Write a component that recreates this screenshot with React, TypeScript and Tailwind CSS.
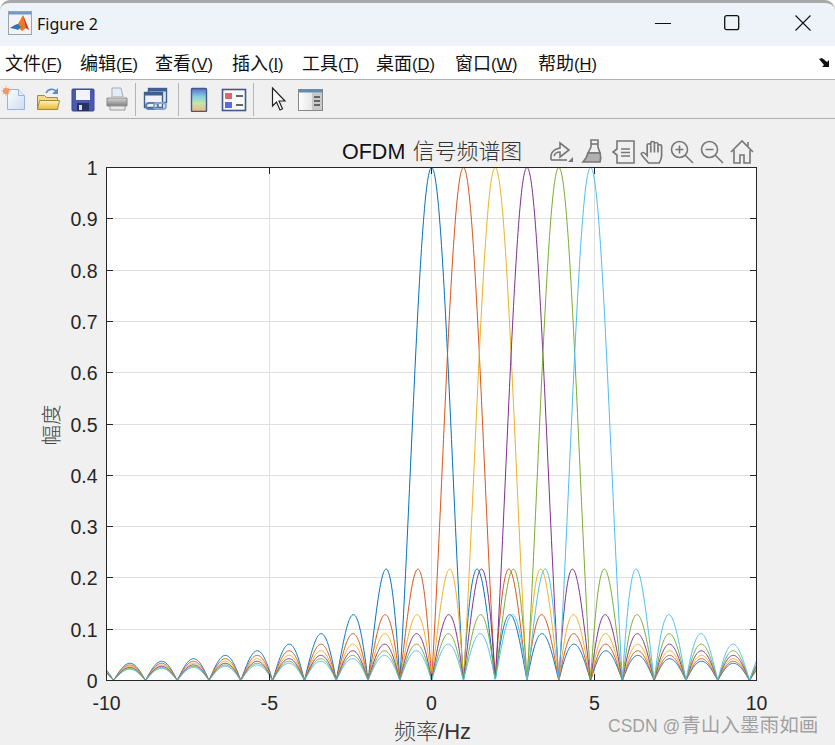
import React from "react";

const X0 = 431.6;
const STEP = 31.8;
const COLORS = ["#0072BD", "#D95319", "#EDB120", "#7E2F8E", "#77AC30", "#4DBEEE"];
const AX_L = 106.5;
const AX_R = 756.5;
const AX_T = 167.5;
const AX_B = 680.5;
const sans = '"Liberation Sans", "Noto Sans CJK SC", sans-serif';
const cjk = '"Noto Sans CJK SC", sans-serif';

function curve(k: number) {
  const c = X0 + k * STEP;
  let d = "";
  for (let x = AX_L; x <= AX_R; x += 0.5) {
    const u = (x - c) / STEP;
    const s = Math.abs(u) < 1e-6 ? 1 : Math.abs(Math.sin(Math.PI * u) / (Math.PI * u));
    d += `${d ? "L" : "M"}${x.toFixed(1)} ${(AX_B - s * (AX_B - AX_T)).toFixed(2)}`;
  }
  return d;
}

const MENU: [string, string, string][] = [
  ["文件", "F", "w-[75px]"],
  ["编辑", "E", "w-[75px]"],
  ["查看", "V", "w-[77px]"],
  ["插入", "I", "w-[70px]"],
  ["工具", "T", "w-[74px]"],
  ["桌面", "D", "w-[79px]"],
  ["窗口", "W", "w-[83px]"],
  ["帮助", "H", "w-[80px]"],
];

function MatlabIcon() {
  return (
    <svg width="24" height="24" viewBox="0 0 24 24" className="shrink-0">
      <rect x="0.5" y="0.5" width="23" height="23" fill="#f3f3f3" stroke="#9aa3ad" />
      <rect x="1" y="1" width="22" height="2.5" fill="#6f9cc8" />
      <path d="M2 17l5-3 3-1 5-9 6 15-3-2-4 3-3-3-3-1z" fill="#e8792b" />
      <path d="M2 17l5-3 3-1 3 3-3 3-3-1z" fill="#2f78b8" />
      <path d="M15 4l6 15-3-2z" fill="#c9391c" />
    </svg>
  );
}

function Sep({ cls }: { cls: string }) {
  return <div className={`w-px h-[33px] bg-[#b4b4b4] shrink-0 ${cls}`} />;
}

function Tool({ cls, children }: { cls: string; children: React.ReactNode }) {
  return (
    <svg width="26" height="26" viewBox="0 0 26 26" className={`shrink-0 ${cls}`}>
      {children}
    </svg>
  );
}

function Toolbar() {
  return (
    <div className="h-[39px] bg-[#f0f0f0] border-b border-[#b0b0b0] flex items-center shrink-0">
      <svg width="0" height="0" className="absolute">
        <defs>
          <linearGradient id="doc" x1="0" y1="0" x2="1" y2="1">
            <stop offset="0" stopColor="#ffffff" />
            <stop offset="1" stopColor="#c9dcf3" />
          </linearGradient>
          <linearGradient id="fold" x1="0" y1="0" x2="0" y2="1">
            <stop offset="0" stopColor="#fff3b0" />
            <stop offset="1" stopColor="#e9b93f" />
          </linearGradient>
          <linearGradient id="cbar" x1="0" y1="0" x2="0" y2="1">
            <stop offset="0" stopColor="#5a6fd0" />
            <stop offset="0.35" stopColor="#86cfe0" />
            <stop offset="0.65" stopColor="#c7e6a8" />
            <stop offset="1" stopColor="#f3b07e" />
          </linearGradient>
          <linearGradient id="prn" x1="0" y1="0" x2="0" y2="1">
            <stop offset="0" stopColor="#d8d8d8" />
            <stop offset="1" stopColor="#7d7d7d" />
          </linearGradient>
          <linearGradient id="pan" x1="0" y1="0" x2="1" y2="0">
            <stop offset="0" stopColor="#ffffff" />
            <stop offset="1" stopColor="#d4d4d4" />
          </linearGradient>
        </defs>
      </svg>
      <Tool cls="ml-[1px]">
        <path d="M6.5 3.5h11l6 6v14h-17z" fill="url(#doc)" stroke="#9db2d4" />
        <path d="M17.5 3.5v6h6" fill="#e4eefa" stroke="#9db2d4" />
        <circle cx="5" cy="5" r="3" fill="#ef8a56" />
        <path d="M5 0v10M0 5h10M1.5 1.5l7 7M8.5 1.5l-7 7" stroke="#f4a070" strokeWidth="0.8" />
      </Tool>
      <Tool cls="ml-[8px]">
        <path d="M2.5 9.5h7l2 2h11v12h-20z" fill="#f3d98a" stroke="#a8893f" />
        <path d="M2.5 23.5l2-9h20l-2 9z" fill="url(#fold)" stroke="#a8893f" />
        <path d="M11 7c2-4 7-5 10-2" fill="none" stroke="#5c8fc0" strokeWidth="1.6" />
        <path d="M23 2v6h-6z" fill="#5c8fc0" />
      </Tool>
      <Tool cls="ml-[9px]">
        <rect x="2" y="3" width="22" height="22" rx="1" fill="#4a5ab0" stroke="#3a4790" />
        <rect x="6" y="4" width="14" height="10" fill="#f2f4fa" />
        <rect x="7" y="17" width="12" height="8" fill="#2a3360" />
        <rect x="9" y="19" width="3" height="5" fill="#d8dcec" />
      </Tool>
      <Tool cls="ml-[8px]">
        <path d="M8 2h9l2 9H8z" fill="#e6ecf3" stroke="#a4acb6" />
        <path d="M3 12h20v8H3z" fill="url(#prn)" stroke="#888" />
        <path d="M5 12l3-2h11l3 2z" fill="#c4c4c4" />
        <path d="M6 20h15v4H6z" fill="#e8e8e8" stroke="#999" />
      </Tool>
      <Sep cls="ml-[5px]" />
      <Tool cls="ml-[7px]">
        <rect x="5.5" y="2.5" width="18" height="14" fill="#dfe8f4" stroke="#3f5f92" strokeWidth="1.4" />
        <rect x="5.5" y="2.5" width="18" height="3" fill="#3f5f92" />
        <rect x="1.5" y="6.5" width="18" height="15" fill="#eef3fa" stroke="#3f5f92" strokeWidth="1.4" />
        <rect x="1.5" y="6.5" width="18" height="3" fill="#3f5f92" />
        <rect x="3" y="17" width="12" height="6" rx="3" fill="none" stroke="#5d7fae" strokeWidth="2" />
        <rect x="11" y="17" width="12" height="6" rx="3" fill="none" stroke="#8aa4c8" strokeWidth="2" />
      </Tool>
      <Sep cls="ml-[9px]" />
      <Tool cls="ml-[7px]">
        <rect x="5.5" y="2.5" width="15" height="23" rx="1" fill="url(#cbar)" stroke="#3f5a8a" strokeWidth="1.4" />
      </Tool>
      <Tool cls="ml-[9px]">
        <rect x="1.5" y="3.5" width="23" height="21" fill="#fafbfd" stroke="#3f5a8a" strokeWidth="1.6" />
        <rect x="4" y="7" width="7" height="6" fill="#e4646c" />
        <rect x="4" y="16" width="7" height="6" fill="#5f68dc" />
        <path d="M15 10h7M15 19h7" stroke="#333" strokeWidth="1.4" />
      </Tool>
      <Sep cls="ml-[6px]" />
      <Tool cls="ml-[11px]">
        <path d="M7.5 2v18l4-4 3.500 8 2.500-1.200-3.500-7.800h6z" fill="#fff" stroke="#222" strokeWidth="1.200" />
      </Tool>
      <Tool cls="ml-[7px]">
        <rect x="0.5" y="3.5" width="24" height="21" fill="url(#pan)" stroke="#888" />
        <rect x="0.5" y="3.5" width="24" height="3" fill="#5f8db0" />
        <rect x="14" y="7" width="10" height="17" fill="#c8c8c8" />
        <path d="M16 11h6M16 15h6M16 19h6" stroke="#444" strokeWidth="1.400" />
      </Tool>
    </div>
  );
}

function AxesIcons() {
  return (
    <g fill="none" stroke="#777" strokeWidth="1.600">
      <g transform="translate(549 139)">
        <path d="M2 21v-5c1-4 4-6 9-7V4l9 7-9 7v-5c-3 0-5 1-6 4" />
        <path d="M2 21h16" />
        <path d="M19 23l5-5v5z" fill="#777" stroke="none" />
      </g>
      <g transform="translate(581 139)">
        <path d="M10 1h7v7l2 6H7l3-6z" />
        <path d="M10 5h7" />
        <path d="M7 14c-1 4-3 7-5 9h17c1-3 1-6 0-9z" fill="#b0b0b0" />
      </g>
      <g transform="translate(611 139)">
        <path d="M6 2h17v22H6v-8l-4-3 4-3z" />
        <path d="M10 10h9M10 13.500h9M10 17h9" />
      </g>
      <g transform="translate(640 139) scale(1.200 1.040)">
        <path d="M7 23c-2-3-6-7-6-9 1-2 3-1 5 2V6c0-2 3-2 3 0V4c0-2 3-2 3 0v1c0-2 3-2 3 0v2c0-2 3-2 3 0v9c0 3-1 5-2 7z" strokeWidth="1.400" />
        <path d="M9 6v7M12 5v8M15 7v6" strokeWidth="1.400" />
      </g>
      <g transform="translate(670 139)">
        <circle cx="9.500" cy="10.500" r="8" />
        <path d="M15 16l8 8M5.500 10.500h8M9.500 6.500v8" />
      </g>
      <g transform="translate(700 139)">
        <circle cx="9.500" cy="10.500" r="8" />
        <path d="M15 16l8 8M5.500 10.500h8" />
      </g>
      <g transform="translate(730 139)">
        <path d="M1 13L12 2l11 11M4 11v13h6v-8h4v8h6V11" />
        <path d="M18 3v4" />
      </g>
    </g>
  );
}

function Chart() {
  const yTicks = Array.from({ length: 11 }, (_, i) => i / 10);
  const ys = (v: number) => Math.round(AX_B - v * (AX_B - AX_T) - 0.5) + 0.5;
  const xs = (v: number) => Math.round(AX_L + ((v + 10) / 20) * (AX_R - AX_L) - 0.5) + 0.5;
  return (
    <svg viewBox="0 119 835 626" className="block w-[835px] h-[626px]" fontFamily={sans}>
      <rect x={AX_L} y={AX_T} width={AX_R - AX_L} height={AX_B - AX_T} fill="#fff" />
      <g stroke="#dfdfdf" strokeWidth="1">
        {yTicks.slice(1, 10).map((v) => (
          <path key={v} d={`M${AX_L} ${ys(v)}H${AX_R}`} />
        ))}
        {[-5, 0, 5].map((v) => (
          <path key={v} d={`M${xs(v)} ${AX_T}V${AX_B}`} />
        ))}
      </g>
      <defs>
        <clipPath id="plotclip">
          <rect x={AX_L} y={AX_T - 1} width={AX_R - AX_L} height={AX_B - AX_T + 1} />
        </clipPath>
      </defs>
      <g fill="none" strokeWidth="1" clipPath="url(#plotclip)">
        {COLORS.map((c, k) => (
          <path key={c} d={curve(k)} stroke={c} />
        ))}
      </g>
      <g stroke="#262626" strokeWidth="1" fill="none">
        <rect x={AX_L} y={AX_T} width={AX_R - AX_L} height={AX_B - AX_T} />
        {yTicks.slice(1, 10).map((v) => (
          <path key={v} d={`M${AX_L} ${ys(v)}h6.500M${AX_R} ${ys(v)}h-6.500`} />
        ))}
        {[-5, 0, 5].map((v) => (
          <path key={v} d={`M${xs(v)} ${AX_B}v-6.500M${xs(v)} ${AX_T}v6.500`} />
        ))}
      </g>
      <g fill="#262626" fontSize="19.500" textAnchor="end">
        {yTicks.map((v) => (
          <text key={v} x="97.500" y={ys(v) + 7}>
            {v === 0 ? "0" : v === 1 ? "1" : v.toFixed(1)}
          </text>
        ))}
      </g>
      <g fill="#262626" fontSize="19.500" textAnchor="middle">
        {[-10, -5, 0, 5, 10].map((v) => (
          <text key={v} x={xs(v)} y="710">
            {v}
          </text>
        ))}
      </g>
      <text x="342" y="158.500" fontSize="21.500" fill="#111">
        OFDM{" "}
        <tspan dx="1.500" fontSize="21.900" fontFamily={cjk} fontWeight="300" fill="#333">
          信号频谱图
        </tspan>
      </text>
      <text x="394" y="739" fontSize="22" fill="#333">
        <tspan fontFamily={cjk} fontWeight="300" fill="#444">
          频率
        </tspan>
        /Hz
      </text>
      <text
        transform="translate(59 425) rotate(-90)"
        textAnchor="middle"
        fontSize="20.500"
        fontFamily={cjk}
        fontWeight="300"
        fill="#444"
      >
        幅度
      </text>
      <AxesIcons />
    </svg>
  );
}

export default function App() {
  return (
    <div className="relative w-[835px] h-[745px] overflow-hidden bg-white flex flex-col">
      <div className="h-[46px] shrink-0 bg-[#eef2f9] rounded-t-[10px] border-t-[3px] border-[#a8a8a8] flex items-center">
        <div className="ml-[8px] mt-[-3px]">
          <MatlabIcon />
        </div>
        <span className="ml-[5px] text-[16px] text-[#111] mt-[-2px]" style={{ fontFamily: '"Noto Sans", sans-serif' }}>
          Figure 2
        </span>
        <div className="ml-auto flex items-center mt-[-3px]">
          <svg width="16" height="16" viewBox="0 0 16 16">
            <path d="M0 8.500h16" stroke="#111" strokeWidth="1" />
          </svg>
          <svg width="16" height="16" viewBox="0 0 16 16" className="ml-[53px]">
            <rect x="0.700" y="0.700" width="14" height="14" rx="2" fill="none" stroke="#111" strokeWidth="1.300" />
          </svg>
          <svg width="16" height="16" viewBox="0 0 16 16" className="ml-[55px] mr-[24px]">
            <path d="M0.500 0.500l15 15M15.500 0.500l-15 15" stroke="#111" strokeWidth="1.100" />
          </svg>
        </div>
      </div>
      <div
        className="h-[34px] shrink-0 bg-white border-b border-[#b0b0b0] flex items-center pl-[5px] relative"
        style={{ fontFamily: cjk }}
      >
        {MENU.map(([t, k, w]) => (
          <span key={t} className={`text-[18px] leading-[24px] text-[#111] whitespace-nowrap ${w}`}>
            {t}
            <span className="text-[16.500px]" style={{ fontFamily: sans }}>
              (<span className="underline">{k}</span>)
            </span>
          </span>
        ))}
        <svg width="12" height="10" viewBox="0 0 12 10" className="absolute right-[4px] top-[12px]">
          <path d="M0 1l3-1 5 4 2-2v7H3l2-2z" fill="#111" />
        </svg>
      </div>
      <Toolbar />
      <div className="flex-1 bg-[#f0f0f0]">
        <Chart />
      </div>
      <span
        className="absolute left-[608px] top-[712px] text-[17.500px] leading-[26px] text-[#8a8a8a]/80 whitespace-nowrap"
        style={{ fontFamily: sans }}
      >
        CSDN @<span className="ml-[1px] text-[19.600px]">青山入墨雨如画</span>
      </span>
    </div>
  );
}
